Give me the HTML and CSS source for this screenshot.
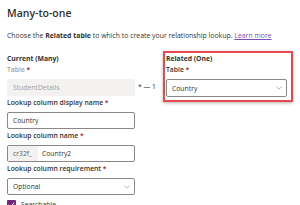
FILE: index.html
```html
<!DOCTYPE html>
<html>
<head>
<meta charset="utf-8">
<link rel="stylesheet" href="styles.css">
</head>
<body>
<div class="page">
  <h1 class="title">Many-to-one</h1>
  <p class="desc">Choose the <b>Related table</b> to which to create your relationship lookup. <a class="link" href="#">Learn more</a></p>
  <div class="row">
    <div class="col-left">
      <div class="section">Current (Many)</div>
      <div class="label muted">Table <span class="req">*</span></div>
      <div class="input disabled">StudentDetails</div>
      <div class="label">Lookup column display name <span class="req">*</span></div>
      <div class="input">Country</div>
      <div class="label">Lookup column name <span class="req">*</span></div>
      <div class="input prefixed"><span class="prefix">cr32f_</span><span class="val">Country2</span></div>
      <div class="label">Lookup column requirement <span class="req">*</span></div>
      <div class="input select">Optional<svg class="chev" viewBox="0 0 8 5"><path d="M0.5 0.5 L4 4 L7.5 0.5" fill="none" stroke="#8a8886" stroke-width="0.8"/></svg></div>
      <div class="check"><span class="box"><svg viewBox="0 0 10 10"><path d="M2.2 5.2 L4.2 7.2 L8 3" fill="none" stroke="#fff" stroke-width="1.1"/></svg></span><span>Searchable</span></div>
    </div>
    <div class="connector">* — 1</div>
    <div class="col-right">
      <div class="section">Related (One)</div>
      <div class="label">Table <span class="req">*</span></div>
      <div class="input select tall">Country<svg class="chev" viewBox="0 0 8 5"><path d="M0.5 0.5 L4 4 L7.5 0.5" fill="none" stroke="#8a8886" stroke-width="0.8"/></svg></div>
    </div>
  </div>
</div>
</body>
</html>
```
FILE: styles.css
```css
html, body {
  margin: 0;
  padding: 0;
  background: #ffffff;
}
body {
  font-family: "Open Sans", "Noto Sans", sans-serif;
  color: #323130;
  overflow: hidden;
  width: 300px;
  height: 205px;
}
.page {
  padding: 6px 7px 0 7px;
}
.title {
  margin: 0;
  font-size: 10.5px;
  font-weight: 600;
  line-height: 14px;
  color: #323130;
}
.desc {
  margin: 11px 0 0 0;
  font-size: 6.9px;
  line-height: 9px;
  color: #323130;
  white-space: nowrap;
}
.desc b {
  font-weight: 700;
}
.link {
  color: #7a4fb0;
  text-decoration: underline;
}
.row {
  display: flex;
  align-items: flex-start;
  margin-top: 11px;
}
.col-left {
  width: 128px;
  padding-top: 4px;
  display: flex;
  flex-direction: column;
}
.section {
  font-size: 6.8px;
  font-weight: 700;
  line-height: 8px;
  color: #323130;
}
.label {
  font-size: 6.8px;
  font-weight: 600;
  line-height: 8px;
  margin-top: 3px;
  color: #323130;
  white-space: nowrap;
}
.label.muted {
  color: #a19f9d;
}
.req {
  color: #a4262c;
}
.input {
  box-sizing: border-box;
  height: 17px;
  margin-top: 5px;
  border: 1px solid #8a8886;
  border-radius: 2px;
  font-size: 6.8px;
  line-height: 15px;
  padding-left: 5px;
  color: #323130;
  display: flex;
  align-items: center;
  position: relative;
}
.input.disabled {
  background: #f3f2f1;
  border-color: #f3f2f1;
  color: #a19f9d;
}
.input.prefixed {
  padding-left: 0;
}
.prefix {
  background: #f3f2f1;
  color: #605e5c;
  height: 100%;
  display: flex;
  align-items: center;
  padding: 0 5px;
  width: 30px;
  box-sizing: border-box;
}
.val {
  padding-left: 4px;
}
.select {
  justify-content: space-between;
  padding-right: 4px;
}
.tall {
  height: 18px;
}
.chev {
  width: 6px;
  height: 4px;
}
.check {
  margin-top: 5px;
  display: flex;
  align-items: flex-start;
  gap: 5px;
  font-size: 6.8px;
  line-height: 10px;
  color: #323130;
}
.box {
  width: 9px;
  height: 9px;
  background: #742774;
  border-radius: 1px;
  display: block;
}
.box svg {
  width: 9px;
  height: 9px;
  display: block;
}
.connector {
  width: 28px;
  box-sizing: border-box;
  padding-top: 32px;
  padding-left: 3px;
  font-size: 6.8px;
  line-height: 8px;
  color: #323130;
  white-space: nowrap;
}
.col-right {
  width: 130px;
  box-sizing: border-box;
  border: 2px solid #e34b4f;
  padding: 2px 4px 3px 1px;
  box-shadow: 0 1px 3px rgba(0, 0, 0, 0.3);
  display: flex;
  flex-direction: column;
}
```
